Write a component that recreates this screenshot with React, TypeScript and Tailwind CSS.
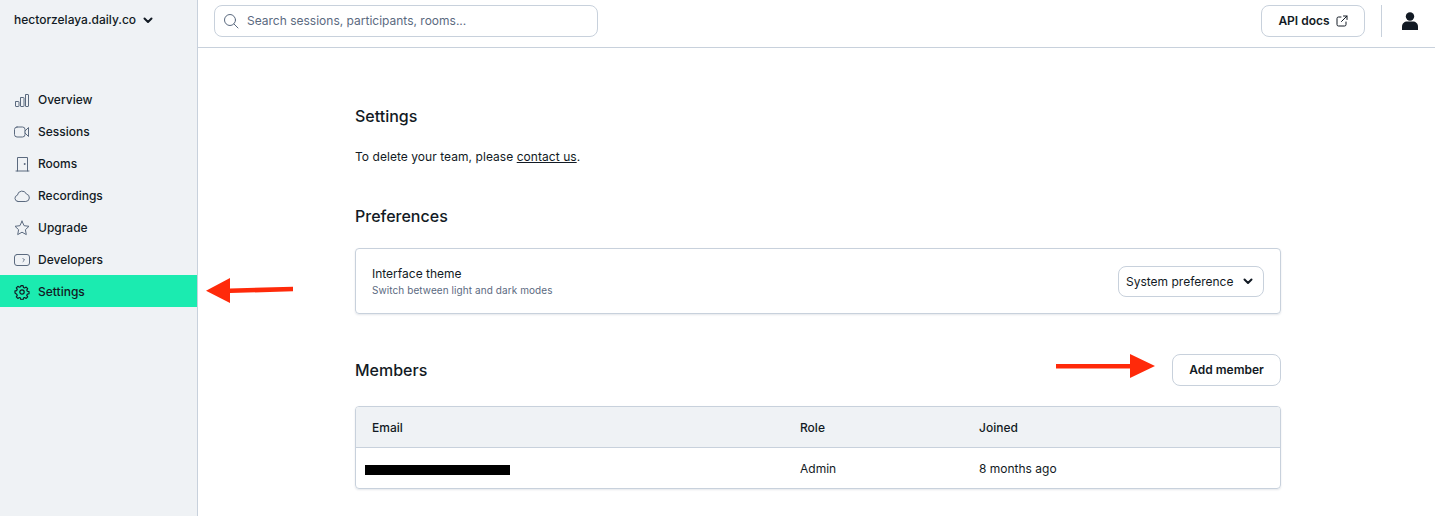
import type { ReactNode } from "react";

const Chevron = ({ className }: { className?: string }) => (
  <svg className={className} width="10" height="7" viewBox="0 0 10 7" fill="none" stroke="currentColor" strokeWidth="2" strokeLinecap="round" strokeLinejoin="round">
    <path d="M1.500 1.500 5 5l3.500-3.500" />
  </svg>
);

const NavIcon = ({ children }: { children: ReactNode }) => (
  <svg width="16" height="16" viewBox="0 0 16 16" fill="none" stroke="#5b6a7f" strokeWidth="1" strokeLinecap="round" strokeLinejoin="round">
    {children}
  </svg>
);

const nav: { label: string; icon: ReactNode }[] = [
  {
    label: "Overview",
    icon: (
      <>
        <rect x="1.500" y="9.500" width="3.500" height="5" rx="0.500" />
        <rect x="6.500" y="5.500" width="3.500" height="9" rx="0.500" />
        <rect x="11.500" y="2.500" width="3" height="12" rx="0.500" />
      </>
    ),
  },
  {
    label: "Sessions",
    icon: (
      <>
        <rect x="0.500" y="3" width="10.500" height="10" rx="2.500" />
        <path d="M11 7l3.500-3.500v9L11 9" />
      </>
    ),
  },
  {
    label: "Rooms",
    icon: (
      <>
        <path d="M3.500 15V1.500h10V15M2 15h13" />
        <circle cx="10.500" cy="8" r="0.500" fill="#5b6a7f" />
      </>
    ),
  },
  {
    label: "Recordings",
    icon: <path d="M4 13.500a3.200 3.200 0 0 1-.6-6.300A4.700 4.700 0 0 1 12.400 6a3.800 3.800 0 0 1-.6 7.500H4z" />,
  },
  {
    label: "Upgrade",
    icon: <path d="M8 1.200l2.100 4.500 4.900.6-3.600 3.400.9 4.900L8 12.200l-4.300 2.400.9-4.900L1 6.300l4.900-.6L8 1.200z" />,
  },
  {
    label: "Developers",
    icon: (
      <>
        <rect x="0.500" y="2.500" width="15" height="11" rx="2.500" />
        <path d="M9 6.500 10.500 8 9 9.500" />
      </>
    ),
  },
  {
    label: "Settings",
    icon: (
      <>
        <circle cx="8" cy="8" r="2.200" stroke="#121a24" strokeWidth="1.200" />
        <path
          stroke="#121a24"
          strokeWidth="1.300"
          d="M6.800 1h2.400l.4 1.900 1.300.6 1.700-1 1.700 1.700-1 1.700.6 1.300 1.900.4v2.400l-1.900.4-.6 1.300 1 1.700-1.700 1.700-1.700-1-1.300.6-.4 1.900H6.800l-.4-1.900-1.300-.6-1.700 1-1.700-1.700 1-1.700-.6-1.300L.2 9.200V6.800l1.900-.4.6-1.300-1-1.700 1.700-1.700 1.700 1 1.300-.6L6.800 1z"
          transform="translate(0.800 0.800) scale(0.900)"
        />
      </>
    ),
  },
];

export default function App() {
  return (
    <div className="flex h-[516px] overflow-hidden bg-white text-[#121a24] font-['Inter',sans-serif]">
      <aside className="w-[198px] shrink-0 border-r border-[#c8d1dc] bg-[#eff2f5]">
        <div className="flex h-[83px] items-start gap-[7px] pl-[14px] pt-[12px] text-[12px] leading-4 font-medium">
          hectorzelaya.daily.co
          <Chevron className="mt-[5px]" />
        </div>
        <nav className="flex flex-col">
          {nav.map((item) => (
            <div
              key={item.label}
              className={`flex h-8 items-center gap-2 pl-[14px] pt-[2px] text-[12px] font-medium ${item.label === "Settings" ? "bg-[#1bebb0]" : ""}`}
            >
              <NavIcon>{item.icon}</NavIcon>
              {item.label}
            </div>
          ))}
        </nav>
      </aside>

      <div className="flex min-w-0 flex-1 flex-col">
        <header className="flex h-12 shrink-0 items-start border-b border-[#c8d1dc] pl-4 pr-[17px] pt-[5px]">
          <div className="flex h-8 w-[384px] items-center gap-2 rounded-lg border border-[#c8d1dc] pl-2 text-[12px] text-[#5b6a7f]">
            <svg width="16" height="16" viewBox="0 0 16 16" fill="none" stroke="#5b6a7f" strokeWidth="1" strokeLinecap="round">
              <circle cx="7" cy="7" r="5.500" />
              <path d="M11 11l4 4" />
            </svg>
            Search sessions, participants, rooms...
          </div>
          <div className="ml-auto flex h-8 w-[104px] items-center justify-center gap-[6px] rounded-lg border border-[#c8d1dc] text-[12px] font-semibold">
            API docs
            <svg width="12" height="12" viewBox="0 0 12 12" fill="none" stroke="currentColor" strokeWidth="1" strokeLinecap="round" strokeLinejoin="round">
              <path d="M5 2H2.500A1.500 1.500 0 0 0 1 3.500v6A1.500 1.500 0 0 0 2.500 11h6A1.500 1.500 0 0 0 10 9.500V7M7.500 1H11v3.500M11 1 5.500 6.500" />
            </svg>
          </div>
          <div className="ml-4 h-8 w-px bg-[#c8d1dc]" />
          <svg className="ml-5 mt-[7px]" width="16" height="18" viewBox="0 0 16 18" fill="#121a24">
            <circle cx="8" cy="4.500" r="4.200" />
            <path d="M0 18v-3.500C0 11.500 2.500 9.500 5 9.500h6c2.500 0 5 2 5 5V18H0z" />
          </svg>
        </header>

        <main className="relative flex-1 pl-[157px] pr-[154px]">
          <h1 className="mt-[58px] text-[16px] leading-5 font-medium">Settings</h1>
          <p className="mt-[23px] text-[12px] leading-4 tracking-[0.05px]">
            To delete your team, please <span className="underline">contact us</span>.
          </p>

          <h2 className="mt-[41px] text-[16px] leading-5 font-medium">Preferences</h2>
          <section className="mt-[22px] flex h-[66px] items-center justify-between rounded border border-[#c8d1dc] px-4 shadow-[0_1px_2px_rgba(40,60,90,0.12)]">
            <div>
              <div className="text-[12px] leading-4">Interface theme</div>
              <div className="mt-[2px] text-[10px] leading-3 tracking-[0.08px] text-[#5b6a7f]">Switch between light and dark modes</div>
            </div>
            <div className="mt-[1px] flex h-[31px] w-[146px] items-center justify-between rounded-lg border border-[#c8d1dc] pl-[7px] pr-[10px] text-[12px]">
              System preference
              <Chevron />
            </div>
          </section>

          <div className="mt-[40px] flex items-center justify-between">
            <h2 className="text-[16px] leading-5 font-medium">Members</h2>
            <div className="flex h-8 w-[109px] items-center justify-center rounded-lg border border-[#c8d1dc] text-[12px] font-semibold">
              Add member
            </div>
          </div>

          <section className="mt-[20px] overflow-hidden rounded border border-[#c8d1dc] shadow-[0_1px_2px_rgba(40,60,90,0.12)]">
            <div className="grid h-[41px] grid-cols-[428px_179px_1fr] items-center border-b border-[#c8d1dc] bg-[#eff2f5] px-4 pt-[2px] text-[12px] font-medium">
              <span>Email</span>
              <span>Role</span>
              <span>Joined</span>
            </div>
            <div className="grid h-[40px] grid-cols-[428px_179px_1fr] items-center px-4 pt-[2px] text-[12px]">
              <span className="-ml-[7px] mt-[2px] h-[10px] w-[145px] bg-black" />
              <span>Admin</span>
              <span>8 months ago</span>
            </div>
          </section>

          <svg className="absolute left-[8px] top-[230px]" width="88" height="25" viewBox="0 0 88 25" fill="#ff2a0a">
            <path d="M0 12.700 24 0v10.500l63-1.800v4.600l-63 1.800V25z" />
          </svg>
          <svg className="absolute left-[858px] top-[306px]" width="99" height="24" viewBox="0 0 99 24" fill="#ff2a0a">
            <path d="M0 10h74V0l25 12-25 12V14.500H0z" />
          </svg>
        </main>
      </div>
    </div>
  );
}
